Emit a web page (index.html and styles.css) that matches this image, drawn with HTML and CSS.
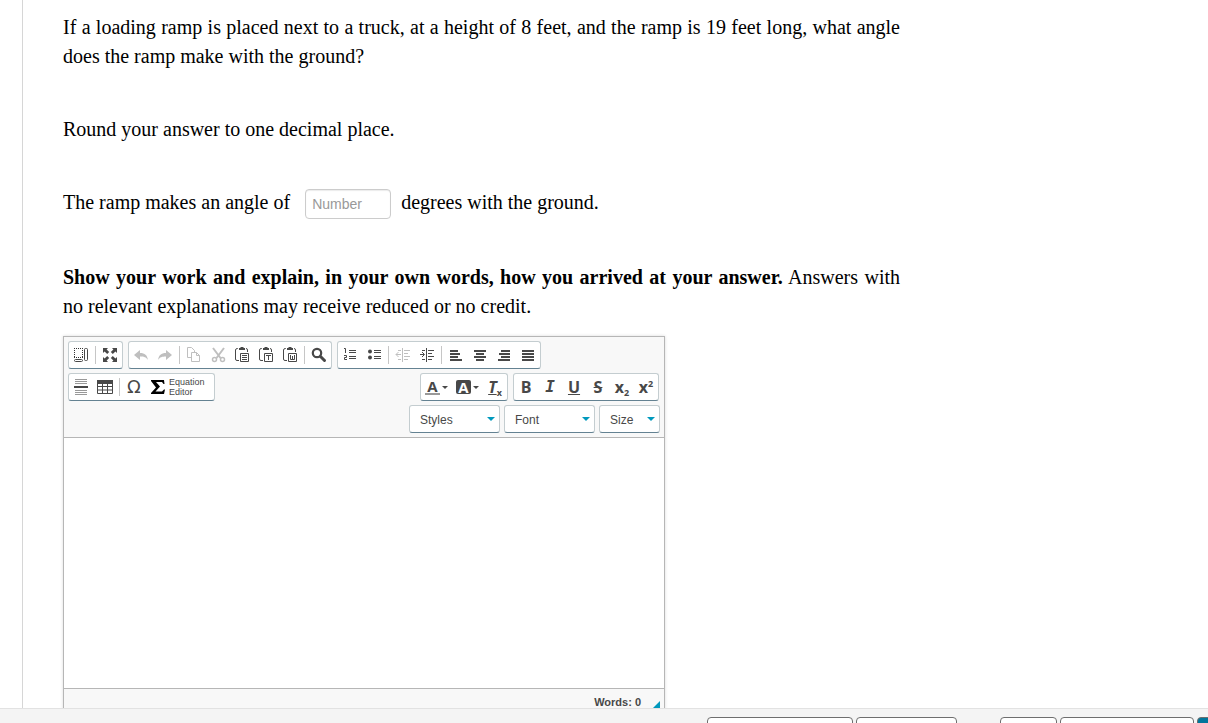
FILE: index.html
```html
<!DOCTYPE html>
<html lang="en">

<head>
    <meta charset="UTF-8">
    <meta name="viewport" content="width=device-width, initial-scale=1.0">
    <title>Question</title>
    <link rel="stylesheet" href="styles.css">
</head>

<body>
    <main class="page">
        <div class="question">
            <p>If a loading ramp is placed next to a truck, at a height of 8 feet, and the ramp is 19 feet long, what angle does the ramp make with the ground?</p>
            <p>Round your answer to one decimal place.</p>
            <p class="answer"><label for="angle">The ramp makes an angle of</label> <input id="angle" class="number" type="text" placeholder="Number"> degrees with the ground.</p>
            <p><b>Show your work and explain, in your own words, how you arrived at your answer.</b> Answers with no relevant explanations may receive reduced or no credit.</p>

            <div class="editor">
                <div class="toolbar">
                    <div class="row">
                        <div class="group">
                            <button class="tool" aria-label="Show Blocks"><svg viewBox="0 0 16 16"><path d="M1 1.500h9M1 10.500h9M1.500 3v7M9.500 3v7" fill="none" stroke="#333" stroke-dasharray="1 1"/><rect x="11.5" y="1.5" width="3" height="12" rx="1" fill="none" stroke="#484848"/><rect x="1.5" y="12.5" width="8" height="2" rx="1" fill="none" stroke="#484848"/></svg></button>
                            <span class="sep"></span>
                            <button class="tool" aria-label="Maximize"><svg viewBox="0 0 16 16"><path d="M1 1h5L4.600 2.400l2.600 2.600L5.200 7 2.600 4.400 1 6zM15 1v5l-1.600-1.600L10.800 7 8.800 5l2.600-2.600L10 1zM1 15v-5l1.600 1.600L5.200 9l2 2-2.600 2.600L6 15zM15 15h-5l1.400-1.400L8.800 11l2-2 2.600 2.600L15 10z"/></svg></button>
                        </div>
                        <div class="group">
                            <button class="tool off" aria-label="Undo"><svg viewBox="0 0 16 16"><path d="M1 8l6-5v3c5 0 7 2 8 7-2-3-4-3.500-8-3.500V13z"/></svg></button>
                            <button class="tool off" aria-label="Redo"><svg viewBox="0 0 16 16"><path d="M15 8L9 3v3c-5 0-7 2-8 7 2-3 4-3.500 8-3.500V13z"/></svg></button>
                            <span class="sep"></span>
                            <button class="tool off" aria-label="Copy"><svg viewBox="0 0 16 16"><path d="M5 10.500H1.500v-10h4l3 3V5M5.500 5.500h5l3 3v6h-8zM10.500 5.500v3h3" fill="none" stroke="#bfbfbf"/></svg></button>
                            <button class="tool off" aria-label="Cut"><svg viewBox="0 0 16 16"><path d="M3 1l7.500 10M14 1L6.500 11" fill="none" stroke="#bfbfbf" stroke-width="2"/><circle cx="4.500" cy="12.500" r="2" fill="none" stroke="#bfbfbf" stroke-width="1.500"/><circle cx="12.500" cy="12.500" r="2" fill="none" stroke="#bfbfbf" stroke-width="1.500"/></svg></button>
                            <button class="tool" aria-label="Paste"><svg viewBox="0 0 16 16"><path d="M4 1.500H3.500Q1.500 1.500 1.500 3v9q0 1.500 1.500 1.500h2M12 1.500q1.500 0 1.500 1.500v2M6.500 6.500h8v8h-8zM8 8.500h5M8 10.500h5M8 12.500h5" fill="none" stroke="#484848"/><path d="M5 1h1.500V0h3v1H11v2H5z"/></svg></button>
                            <button class="tool" aria-label="Paste as plain text"><svg viewBox="0 0 16 16"><path d="M4 1.500H3.500Q1.500 1.500 1.500 3v9q0 1.500 1.500 1.500h2M12 1.500q1.500 0 1.500 1.500v2M6.500 6.500h8v8h-8zM8 8.500h5M10.500 8.500V13" fill="none" stroke="#484848"/><path d="M5 1h1.500V0h3v1H11v2H5z"/></svg></button>
                            <button class="tool" aria-label="Paste from Word"><svg viewBox="0 0 16 16"><path d="M4 1.500H3.500Q1.500 1.500 1.500 3v9q0 1.500 1.500 1.500h2M12 1.500q1.500 0 1.500 1.500v2M6.500 6.500h8v8h-8zM8.500 8v4.500h4V8M10.500 9v3.500" fill="none" stroke="#484848"/><path d="M5 1h1.500V0h3v1H11v2H5z"/></svg></button>
                            <span class="sep"></span>
                            <button class="tool" aria-label="Find"><svg viewBox="0 0 16 16"><circle cx="6" cy="6" r="4.200" fill="none" stroke="#484848" stroke-width="2.200"/><path d="M9.500 9.500l4 4" fill="none" stroke="#484848" stroke-width="3" stroke-linecap="round"/></svg></button>
                        </div>
                        <div class="group">
                            <button class="tool" aria-label="Numbered List"><svg viewBox="0 0 16 16"><path d="M7 3.500h7M7 5.500h7M7 9.500h7M7 11.500h7M2 1.500h1.500V6M2 8.500h2.500v2h-2v2H5" fill="none" stroke="#484848"/></svg></button>
                            <button class="tool" aria-label="Bulleted List"><svg viewBox="0 0 16 16"><path d="M8 3.500h7M8 5.500h7M8 9.500h7M8 11.500h7" fill="none" stroke="#484848"/><circle cx="4" cy="4.500" r="2"/><circle cx="4" cy="10.500" r="2"/></svg></button>
                            <span class="sep"></span>
                            <button class="tool off" aria-label="Decrease Indent"><svg viewBox="0 0 16 16"><path d="M7.500 1v14M9 3.500h6M9 6.500h4M9 9.500h6M9 12.500h4M1 7.500h5M3.500 5L1 7.500 3.500 10M3 3.500h3M3 12.500h3" fill="none" stroke="#bfbfbf"/></svg></button>
                            <button class="tool" aria-label="Increase Indent"><svg viewBox="0 0 16 16"><path d="M7.500 1v14M9 3.500h6M9 6.500h4M9 9.500h6M9 12.500h4M1 7.500h4M3 5l2.500 2.500L3 10M3 3.500h3M3 12.500h3" fill="none" stroke="#484848"/></svg></button>
                            <span class="sep"></span>
                            <button class="tool" aria-label="Align Left"><svg viewBox="0 0 16 16"><path d="M2 3h8v2H2zM2 6h10v2H2zM2 9h8v2H2zM2 12h12v2H2z"/></svg></button>
                            <button class="tool" aria-label="Center"><svg viewBox="0 0 16 16"><path d="M2 3h12v2H2zM4 6h8v2H4zM2 9h12v2H2zM4 12h8v2H4z"/></svg></button>
                            <button class="tool" aria-label="Align Right"><svg viewBox="0 0 16 16"><path d="M5 3h9v2H5zM3 6h11v2H3zM5 9h9v2H5zM2 12h12v2H2z"/></svg></button>
                            <button class="tool" aria-label="Justify"><svg viewBox="0 0 16 16"><path d="M2 3h12v2H2zM2 6h12v2H2zM2 9h12v2H2zM2 12h12v2H2z"/></svg></button>
                        </div>
                    </div>

                    <div class="row">
                        <div class="group">
                            <button class="tool" aria-label="Insert Horizontal Line"><svg viewBox="0 0 16 16"><path d="M2 .5h12M2 2.500h12M2 4.500h12M2 11.500h12M2 13.500h12M2 15.500h12" stroke="#999"/><path d="M1 7h14v2H1z"/></svg></button>
                            <button class="tool" aria-label="Table"><svg viewBox="0 0 16 16"><path d="M0 1h16v4H0z"/><path d="M.5 3v11.500h15V3M0 7.500h16M0 11h16M5.500 4v10M10.500 4v10" fill="none" stroke="#484848"/></svg></button>
                            <span class="sep"></span>
                            <button class="tool omega" aria-label="Insert Special Character">Ω</button>
                            <button class="tool equation"><svg viewBox="0 0 16 16"><path d="M1 1h13l.5 4h-1L12 3H6l4 4.500L5.500 12.500H12l2-2h1L14 15H1v-1l5-5.500L1 2z" fill="#000"/></svg><span>Equation<br>Editor</span></button>
                        </div>
                        <div class="group push">
                            <button class="tool wide" aria-label="Text Color"><span class="ink">A</span><i class="down"></i></button>
                            <button class="tool wide" aria-label="Background Color"><span class="ink fill">A</span><i class="down"></i></button>
                            <button class="tool clear" aria-label="Remove Format"><em>T</em><sub>x</sub></button>
                        </div>
                        <div class="group last">
                            <button class="tool bold">B</button>
                            <button class="tool italic">I</button>
                            <button class="tool under">U</button>
                            <button class="tool strike">S</button>
                            <button class="tool script">x<sub>2</sub></button>
                            <button class="tool script">x<sup>2</sup></button>
                        </div>
                    </div>

                    <div class="row combos">
                        <div class="combo"><select aria-label="Styles"><option>Styles</option></select></div>
                        <div class="combo"><select aria-label="Font"><option>Font</option></select></div>
                        <div class="combo small"><select aria-label="Size"><option>Size</option></select></div>
                    </div>
                </div>
                <textarea class="content" aria-label="Explanation"></textarea>
                <div class="status"><span>Words: 0</span><i class="resizer"></i></div>
            </div>
        </div>
    </main>

    <footer class="bar">
        <button class="action save"></button>
        <button class="action quit"></button>
        <button class="action back"></button>
        <button class="action next"></button>
        <button class="action submit"></button>
    </footer>
</body>

</html>
```

FILE: styles.css
```css
* {
    box-sizing: border-box;
}

body {
    margin: 0;
    height: 100vh;
    overflow: hidden;
    background-color: #fff;
    color: #000;
    font-family: "Liberation Serif", "Times New Roman", serif;
    font-size: 20px;
    line-height: 29px;
}

.page {
    height: calc(100vh - 15px);
    margin-left: 22px;
    padding: 13px 40px 0;
    border-left: 1px solid #d6d6d6;
    overflow: hidden;
}

.question {
    max-width: 837px;
}

.question p {
    margin: 0 0 44px;
    text-align: justify;
}

.question p:last-of-type {
    margin-bottom: 15px;
}

.number {
    width: 86px;
    height: 30px;
    margin: 0 5px 0 10px;
    padding: 0 6px;
    border: 1px solid #ccc;
    border-radius: 4px;
    box-shadow: inset 0 1px 1px rgba(0, 0, 0, 0.08);
    font: 14px "Liberation Sans", Arial, sans-serif;
    vertical-align: middle;
}

.number::placeholder {
    color: #999;
}

/* editor */
.editor {
    max-width: 602px;
    border: 1px solid #b6b6b6;
    box-shadow: 0 0 3px rgba(0, 0, 0, 0.15);
    font-family: "Liberation Sans", Arial, sans-serif;
    line-height: 16px;
}

.toolbar {
    display: flex;
    flex-direction: column;
    gap: 4px;
    padding: 4px;
    background-color: #f8f8f8;
    border-bottom: 1px solid #b6b6b6;
}

.row {
    display: flex;
    gap: 5px;
}

.group {
    display: flex;
    align-items: center;
    height: 28px;
    background-color: #fff;
    border: 1px solid #c4cdd0;
    border-bottom-color: #648292;
    border-radius: 3px;
}

.push {
    margin-left: auto;
}

.last {
    margin-right: 1px;
}

.tool {
    display: flex;
    align-items: center;
    justify-content: center;
    width: 24px;
    height: 26px;
    padding: 0;
    border: 0;
    background: none;
    color: #484848;
    font: bold 16px/16px "Open Sans", "Noto Sans", sans-serif;
}

.tool svg {
    flex: none;
    width: 16px;
    height: 16px;
    fill: #484848;
}

.tool.off svg {
    fill: #bfbfbf;
}

.sep {
    width: 1px;
    height: 18px;
    margin: 0 2px;
    background-color: #c6c6c6;
}

.tool.omega {
    font: 18px/18px "DejaVu Sans", sans-serif;
}

.tool.equation {
    justify-content: flex-start;
    gap: 3px;
    width: 68px;
    padding-left: 4px;
    font: 9px/10px "Liberation Sans", Arial, sans-serif;
    text-align: left;
}

.tool.wide {
    gap: 2px;
    width: 31px;
}

.ink {
    width: 15px;
    height: 16px;
    border-bottom: 2px solid #999;
    font-size: 15px;
    line-height: 14px;
}

.ink.fill {
    height: 14px;
    border: 0;
    border-radius: 2px;
    background-color: #484848;
    color: #fff;
}

.down {
    border: 3px solid transparent;
    border-top-color: #484848;
    border-bottom: 0;
}

.clear em {
    text-decoration: underline;
}

.tool sub,
.tool sup {
    font-size: 9px;
    line-height: 9px;
}

.tool sub {
    align-self: flex-end;
    padding-bottom: 3px;
}

.tool sup {
    align-self: flex-start;
    padding-top: 5px;
}

.tool.italic {
    font-family: "DejaVu Sans Mono", monospace;
    font-style: italic;
}

.under {
    text-decoration: underline;
}

.strike {
    text-decoration: line-through;
}

.combos {
    justify-content: flex-end;
    gap: 4px;
}

.combo {
    position: relative;
    width: 91px;
}

.combo.small {
    width: 61px;
}

.combo select {
    display: block;
    appearance: none;
    width: 100%;
    height: 28px;
    padding: 1px 10px 0;
    background-color: #fff;
    border: 1px solid #c4cdd0;
    border-bottom-color: #648292;
    border-radius: 3px;
    color: #484848;
    font: 12px "Liberation Sans", Arial, sans-serif;
}

/* drop-down arrow */
.combo::after {
    content: "";
    position: absolute;
    top: 12px;
    right: 5px;
    border: 4px solid transparent;
    border-top-color: #0099bd;
    border-bottom: 0;
    pointer-events: none;
}

.content {
    display: block;
    width: 100%;
    height: 250px;
    border: 0;
    resize: none;
    outline: none;
}

.status {
    display: flex;
    justify-content: flex-end;
    gap: 12px;
    padding: 5px 4px;
    background-color: #f8f8f8;
    border-top: 1px solid #b6b6b6;
    color: #484848;
    font-size: 11px;
    font-weight: bold;
}

.resizer {
    align-self: center;
    margin-top: 4px;
    border-left: 7px solid transparent;
    border-bottom: 7px solid #0099bd;
}

/* bottom bar */
.bar {
    display: flex;
    justify-content: flex-end;
    gap: 3px;
    height: 15px;
    padding-top: 8px;
    background-color: #f4f4f4;
    border-top: 1px solid #e2e2e2;
    overflow: hidden;
}

.action {
    flex: none;
    height: 36px;
    background-color: #fff;
    border: 1px solid #6e6e6e;
    border-radius: 4px;
}

.save {
    width: 146px;
}

.quit {
    width: 101px;
    margin-right: 40px;
}

.back {
    width: 57px;
}

.next {
    width: 134px;
}

.submit {
    width: 100px;
    margin-right: -89px;
    background-color: #00769c;
}
```
